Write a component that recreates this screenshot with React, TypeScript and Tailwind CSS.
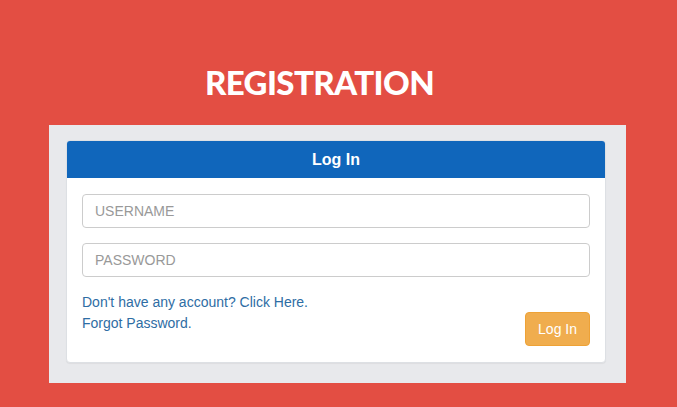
import React from "react"

export default function App() {
  return (
    <div className="w-[677px] h-[407px] bg-[#e34e43] flex flex-col overflow-hidden" style={{ fontFamily: '"Liberation Sans", Arial, sans-serif' }}>
      <h1 className="mt-[62px] h-[40px] text-center text-[33px] leading-[40px] font-black text-white tracking-[-0.6px] font-['Lato',sans-serif] w-[639px]">
        REGISTRATION
      </h1>
      <div className="mt-[23px] ml-[49px] w-[577px] h-[258px] bg-[#e8e9ec] pt-[15px] pl-[17px]">
        <div className="w-[540px] bg-white rounded-[4px] border border-[#dde0e4] overflow-hidden shadow-[0_1px_1px_rgba(0,0,0,0.05)]">
          <div className="h-[37px] bg-[#1066bb] flex items-center justify-center text-white font-bold text-[16px]">
            Log In
          </div>
          <div className="pl-[14px] pr-[15px] pt-[16px] pb-[16px]">
            <input
              className="block ml-[1px] w-[508px] h-[34px] px-[12px] border border-[#cccccc] rounded-[4px] text-[14px] text-[#555] placeholder:text-[#999] outline-none"
              placeholder="USERNAME"
            />
            <input
              type="password"
              className="block ml-[1px] w-[508px] h-[34px] mt-[15px] px-[12px] border border-[#cccccc] rounded-[4px] text-[14px] text-[#555] placeholder:text-[#999] outline-none"
              placeholder="PASSWORD"
            />
            <div className="mt-[15px] pl-[1px] flex justify-between items-start">
              <div className="text-[14px] leading-[21px] text-[#2e6da4]">
                <a className="block">Don't have any account? Click Here.</a>
                <a className="block">Forgot Password.</a>
              </div>
              <button className="mt-[20px] h-[34px] px-[12px] rounded-[4px] bg-[#f0ad4e] border border-[#eea236] text-white text-[14px]">
                Log In
              </button>
            </div>
          </div>
        </div>
      </div>
    </div>
  )
}
